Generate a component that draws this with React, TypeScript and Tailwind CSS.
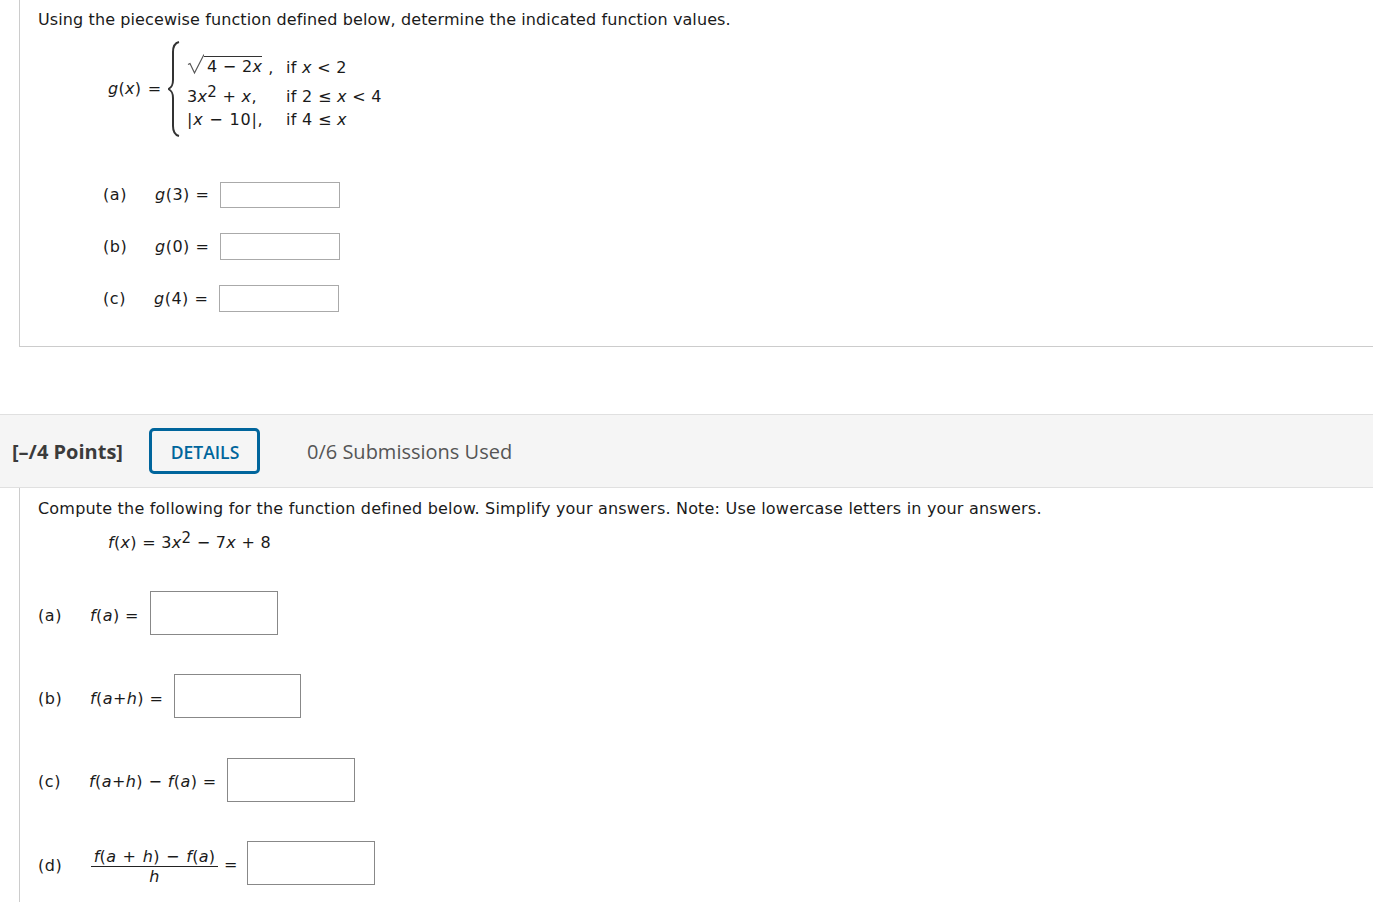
const mathFont = "font-['DejaVu_Sans',sans-serif]";
const math = "tracking-[0.3px] whitespace-nowrap";
const wide = "tracking-[0.4px] whitespace-nowrap";
const supCls = "text-[15px] leading-[0] align-baseline top-[-5px]";

function V({ children }: { children: React.ReactNode }) {
  return <i className="italic">{children}</i>;
}

function Box({ className }: { className: string }) {
  return <div className={`shrink-0 bg-white border ${className}`} />;
}

function SmallRow({ label, labelW, expr, mt, h }: { label: string; labelW: string; expr: React.ReactNode; mt: string; h: string }) {
  return (
    <div className={`flex items-center ${h} ${mt}`}>
      <span className={`${labelW} tracking-[0.6px]`}>{label}</span>
      <span className={`w-[65px] tracking-[0.5px] whitespace-nowrap`}>{expr}</span>
      <Box className={`w-[120px] ${h} border-[#aaaaaa]`} />
    </div>
  );
}

function BigRow({ label, labelW, expr, exprW, mt, boxW, pt }: { label: string; labelW: string; expr: React.ReactNode; exprW: string; mt: string; boxW: string; pt: string }) {
  return (
    <div className={`flex items-center h-[44px] ${mt}`}>
      <span className={`${labelW} ${pt} tracking-[0.6px]`}>{label}</span>
      <span className={`${exprW} ${pt} ${wide}`}>{expr}</span>
      <Box className={`${boxW} h-[44px] border-[#888888]`} />
    </div>
  );
}

export default function App() {
  return (
    <div className={`w-[1373px] h-[902px] overflow-hidden bg-white text-[#1a1a1a] text-[16px] leading-[20px] ${mathFont}`}>
      <section className="ml-[19px] h-[347px] border-l border-b border-[#cccccc] pl-[18px] pt-[10px]">
        <p className="whitespace-nowrap tracking-[0.105px]">Using the piecewise function defined below, determine the indicated function values.</p>
        <div className="flex items-center ml-[70px] mt-[10px] h-[98px]">
          <span className={`w-[60px] ${math} [word-spacing:1px]`}><V>g</V>(<V>x</V>) =</span>
          <svg width="18" height="98" viewBox="0 0 18 98" className="shrink-0 mr-[1px]" fill="none" stroke="#333333" strokeWidth="2">
            <path d="M11 2 C7 3 5 6 5 12 L5 40 C5 45 4 47 0.5 49 C4 51 5 53 5 58 L5 86 C5 92 7 95 11 96" />
          </svg>
          <div className="flex flex-col">
            <div className="flex h-[32px] items-end pb-[2px]">
              <span className="w-[99px] flex items-end whitespace-nowrap">
                <svg width="17" height="24" viewBox="0 0 17 24" className="shrink-0" fill="none" stroke="#555555" strokeWidth="1.2">
                  <path d="M1 10.5 L3 9.5 L7.5 19 L17 0.5" />
                </svg>
                <span className={`border-t border-[#333333] leading-[20px] pb-[1px] pl-[3px] ${math}`}>4 − 2<V>x</V></span>
                <span className="ml-[6px]">,</span>
              </span>
              <span className={math}>if <V>x</V> &lt; 2</span>
            </div>
            <div className="flex h-[27px] items-end">
              <span className={`w-[99px] ${math}`}>3<V>x</V><sup className={supCls}>2</sup> + <V>x</V>,</span>
              <span className={math}>if 2 ≤ <V>x</V> &lt; 4</span>
            </div>
            <div className="flex h-[23px] items-end">
              <span className="w-[99px] tracking-[0.8px] whitespace-nowrap">|<V>x</V> − 10|,</span>
              <span className={math}>if 4 ≤ <V>x</V></span>
            </div>
          </div>
        </div>
        <div className="ml-[65px] mt-[44px]">
          <SmallRow label="(a)" labelW="w-[52px]" expr={<><V>g</V>(3) =</>} mt="" h="h-[26px]" />
          <SmallRow label="(b)" labelW="w-[52px]" expr={<><V>g</V>(0) =</>} mt="mt-[25px]" h="h-[27px]" />
          <SmallRow label="(c)" labelW="w-[51px]" expr={<><V>g</V>(4) =</>} mt="mt-[25px]" h="h-[27px]" />
        </div>
      </section>

      <header className="mt-[67px] h-[74px] bg-[#f5f5f5] border-y border-[#e0e0e0] flex items-center font-['Open_Sans',sans-serif]">
        <span className="ml-[12px] w-[137px] pt-[2px] font-bold text-[20px] text-[#3b3b3b] whitespace-nowrap">[–/4 Points]</span>
        <div className="w-[111px] h-[46px] rounded-[5px] border-[3px] border-[#00659c] flex items-center justify-center pt-[2px] pl-[1px] text-[#00659c] text-[17.5px] font-semibold">DETAILS</div>
        <span className="ml-[47px] pt-[2px] text-[20px] text-[#555555] whitespace-nowrap">0/6 Submissions Used</span>
      </header>

      <section className="ml-[19px] h-[420px] border-l border-[#cccccc] pl-[18px] pt-[11px]">
        <p className="whitespace-nowrap tracking-[0.193px]">Compute the following for the function defined below. Simplify your answers. Note: Use lowercase letters in your answers.</p>
        <p className={`ml-[70px] mt-[14px] ${math}`}><V>f</V>(<V>x</V>) = 3<V>x</V><sup className={supCls}>2</sup> − 7<V>x</V> + 8</p>
        <div className="mt-[38px]">
          <BigRow label="(a)" labelW="w-[52px]" expr={<><V>f</V>(<V>a</V>) =</>} exprW="w-[60px]" mt="" boxW="w-[128px]" pt="pt-[6px]" />
          <BigRow label="(b)" labelW="w-[52px]" expr={<><V>f</V>(<V>a</V>+<V>h</V>) =</>} exprW="w-[84px]" mt="mt-[39px]" boxW="w-[127px]" pt="pt-[6px]" />
          <BigRow label="(c)" labelW="w-[51px]" expr={<><V>f</V>(<V>a</V>+<V>h</V>) − <V>f</V>(<V>a</V>) =</>} exprW="w-[138px]" mt="mt-[40px]" boxW="w-[128px]" pt="pt-[4px]" />
          <div className="flex items-center h-[44px] mt-[39px]">
            <span className="w-[53px] pt-[6px] tracking-[0.6px]">(d)</span>
            <span className={`w-[127px] pt-[6px] flex flex-col items-center ${math}`}>
              <span className="w-full text-center border-b border-[#222222] leading-[19px] [word-spacing:1px]"><V>f</V>(<V>a</V> + <V>h</V>) − <V>f</V>(<V>a</V>)</span>
              <span className="leading-[19px]"><V>h</V></span>
            </span>
            <span className="w-[29px] pl-[6px] pt-[4px]">=</span>
            <Box className="w-[128px] h-[44px] border-[#888888]" />
          </div>
        </div>
      </section>
    </div>
  );
}
